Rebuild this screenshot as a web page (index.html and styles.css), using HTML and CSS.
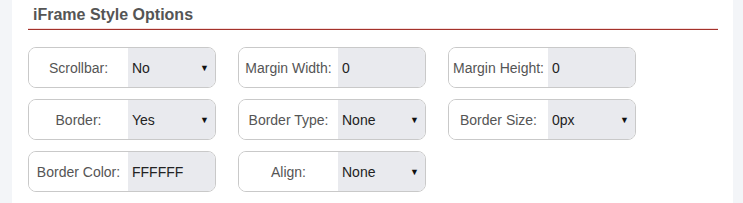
FILE: index.html
```html
<!DOCTYPE html>
<html>
<head>
<meta charset="utf-8">
<link rel="stylesheet" href="styles.css">
</head>
<body>
<div class="panel">
  <div class="header"><h2 class="title">iFrame Style Options</h2></div>
  <div class="grid">
    <div class="field"><span class="label">Scrollbar:</span><span class="value select">No<span class="arrow">&#9660;</span></span></div>
    <div class="field"><span class="label">Margin Width:</span><span class="value">0</span></div>
    <div class="field"><span class="label">Margin Height:</span><span class="value">0</span></div>
    <div class="field"><span class="label">Border:</span><span class="value select">Yes<span class="arrow">&#9660;</span></span></div>
    <div class="field"><span class="label">Border Type:</span><span class="value select">None<span class="arrow">&#9660;</span></span></div>
    <div class="field"><span class="label">Border Size:</span><span class="value select">0px<span class="arrow">&#9660;</span></span></div>
    <div class="field"><span class="label">Border Color:</span><span class="value">FFFFFF</span></div>
    <div class="field"><span class="label">Align:</span><span class="value select">None<span class="arrow">&#9660;</span></span></div>
  </div>
</div>
</body>
</html>
```
FILE: styles.css
```css
html, body {
  margin: 0;
  padding: 0;
}
body {
  background: #f3f5f8;
  font-family: "Liberation Sans", Arial, sans-serif;
  width: 743px;
  height: 203px;
  overflow: hidden;
}
.panel {
  margin-left: 12px;
  width: 721px;
  height: 203px;
  background: #fff;
  padding: 0 15px 0 16px;
  box-sizing: border-box;
}
.header {
  padding: 6px 5px 5px;
  border-bottom: 1px solid #a3322b;
  box-shadow: 0 -1px 0 #f6dcdc inset;
}
.title {
  margin: 0;
  font-size: 16px;
  line-height: 18px;
  font-weight: bold;
  color: #555;
}
.grid {
  margin-top: 17px;
  display: grid;
  grid-template-columns: repeat(3, 188px);
  grid-auto-rows: 41px;
  column-gap: 22px;
  row-gap: 11px;
}
.field {
  display: flex;
  border: 1px solid #c9c9c9;
  border-radius: 8px;
  overflow: hidden;
  font-size: 14px;
}
.label {
  width: 99px;
  flex: none;
  display: flex;
  align-items: center;
  justify-content: center;
  color: #555;
  background: #fff;
  white-space: nowrap;
}
.value {
  flex: 1;
  display: flex;
  align-items: center;
  background: #e9eaee;
  color: #222;
  padding-left: 4px;
  position: relative;
}
.arrow {
  position: absolute;
  right: 6px;
  top: 50%;
  transform: translateY(-50%);
  font-size: 9px;
  color: #111;
}
```
